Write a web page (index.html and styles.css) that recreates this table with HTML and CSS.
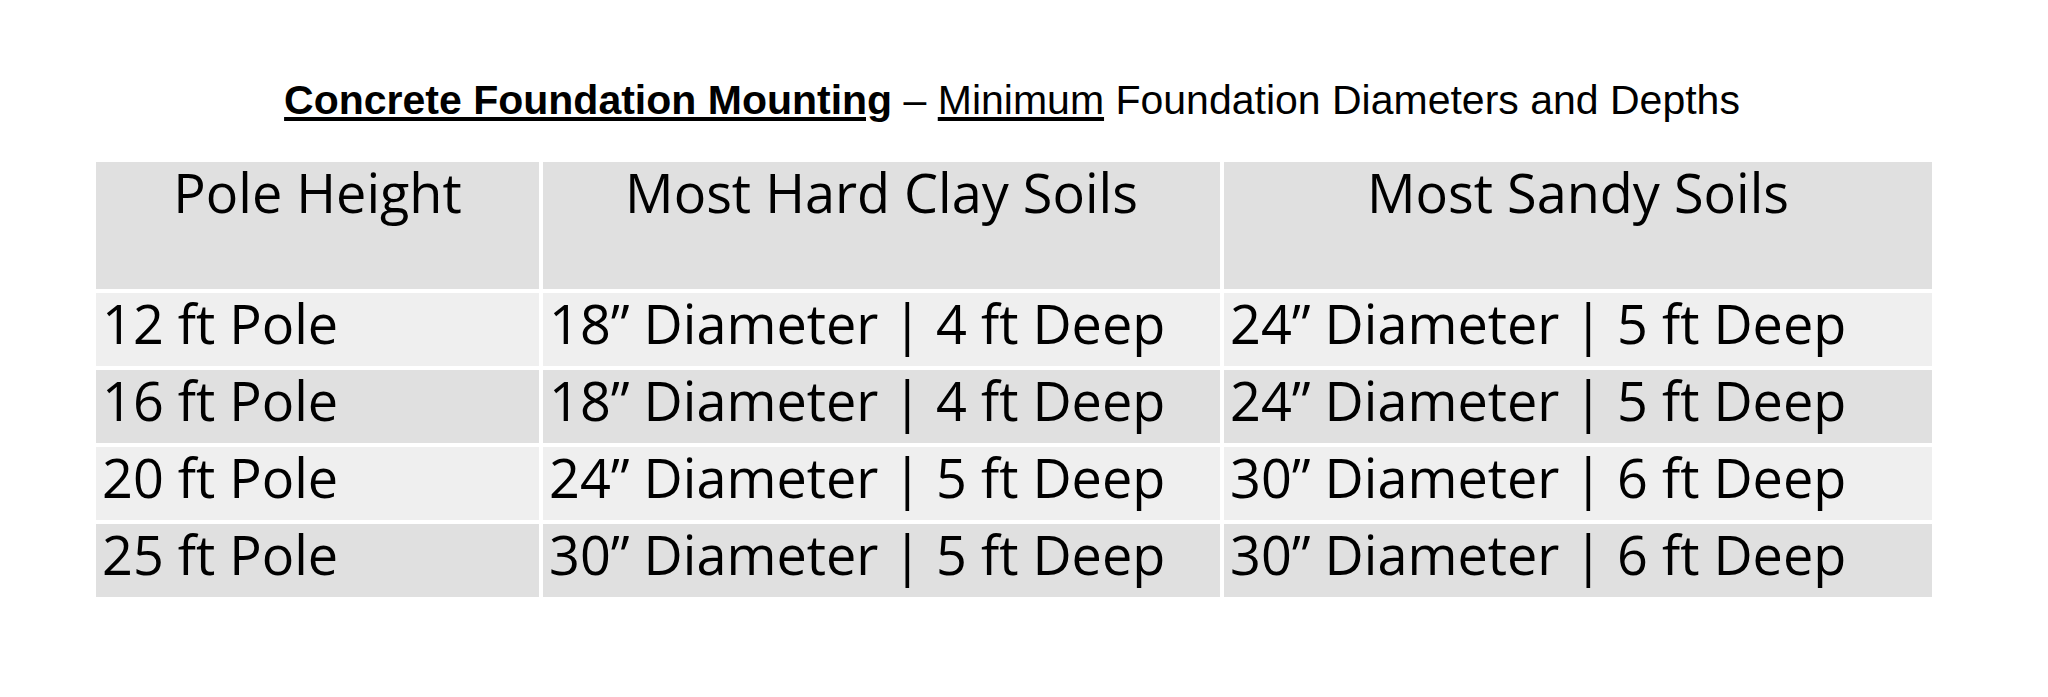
FILE: index.html
```html
<!DOCTYPE html>
<html>
<head>
<meta charset="utf-8">
<link rel="stylesheet" href="styles.css">
</head>
<body>
<div class="page">
  <h1 class="title"><span class="strong">Concrete Foundation Mounting</span> – <u>Minimum</u> Foundation Diameters and Depths</h1>
  <table class="grid">
    <colgroup>
      <col class="c1"><col class="c2"><col class="c3">
    </colgroup>
    <thead>
      <tr class="head">
        <th>Pole Height</th>
        <th>Most Hard Clay Soils</th>
        <th>Most Sandy Soils</th>
      </tr>
    </thead>
    <tbody>
      <tr class="light"><td>12 ft Pole</td><td>18” Diameter | 4 ft Deep</td><td>24” Diameter | 5 ft Deep</td></tr>
      <tr class="dark"><td>16 ft Pole</td><td>18” Diameter | 4 ft Deep</td><td>24” Diameter | 5 ft Deep</td></tr>
      <tr class="light"><td>20 ft Pole</td><td>24” Diameter | 5 ft Deep</td><td>30” Diameter | 6 ft Deep</td></tr>
      <tr class="dark"><td>25 ft Pole</td><td>30” Diameter | 5 ft Deep</td><td>30” Diameter | 6 ft Deep</td></tr>
    </tbody>
  </table>
</div>
</body>
</html>
```

FILE: styles.css
```css
html, body {
  margin: 0;
  padding: 0;
  background: #ffffff;
}
.page {
  width: 1840px;
  margin-left: 92px;
  padding-top: 76px;
}
.title {
  margin: 0;
  font-family: "Liberation Sans", Arial, sans-serif;
  font-weight: normal;
  font-size: 41px;
  line-height: 48px;
  color: #000;
  text-align: center;
}
.title .strong {
  font-weight: bold;
  text-decoration: underline;
}
.grid {
  margin-top: 34px;
  border-collapse: collapse;
  table-layout: fixed;
  width: 1840px;
  font-family: "Open Sans", sans-serif;
  font-size: 54px;
  color: #000;
}
.c1 { width: 447px; }
.c2 { width: 681px; }
.c3 { width: 712px; }
.grid th, .grid td {
  border: 4px solid #ffffff;
  padding: 0 6px;
  white-space: nowrap;
}
.grid th {
  background: #e0e0e0;
  font-weight: normal;
  text-align: center;
  vertical-align: top;
  height: 127px;
  line-height: 60px;
}
.grid td {
  height: 73px;
  line-height: 60px;
  text-align: left;
  vertical-align: top;
}
.light td { background: #efefef; }
.dark td { background: #e0e0e0; }
```
